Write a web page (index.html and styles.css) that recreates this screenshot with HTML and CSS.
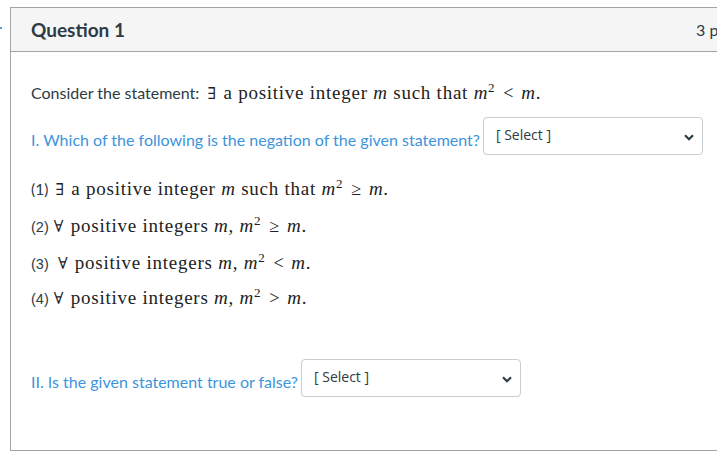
FILE: index.html
```html
<!DOCTYPE html>
<html>
<head>
<meta charset="utf-8">
<link rel="stylesheet" href="styles.css">
</head>
<body>
<div class="page">
  <span class="edge-mark"></span>
  <div class="card">
    <div class="card-header">
      <h2 class="title">Question 1</h2>
      <span class="points">3 pts</span>
    </div>
    <div class="card-body">
      <p class="line">Consider the statement:&nbsp; <span class="math"><span class="q">∃</span> a positive integer <i>m</i> such that <i>m</i><sup>2</sup><span class="rel">&lt;</span><i>m</i>.</span></p>
      <div class="row row-1">
        <span class="label">I. Which of the following is the negation of the given statement?</span>
        <div class="select wide"><span class="select-text">[ Select ]</span><svg class="chev" width="10" height="7" viewBox="0 0 10 7"><path d="M1 1.2 L5 5.2 L9 1.2" fill="none" stroke="#2d3b45" stroke-width="2.2"/></svg></div>
      </div>
      <p class="line opt"><span class="num">(1)</span> <span class="math"><span class="q">∃</span> a positive integer <i>m</i> such that <i>m</i><sup>2</sup><span class="rel">≥</span><i>m</i>.</span></p>
      <p class="line opt"><span class="num alt">(2)</span> <span class="math"><span class="q">∀</span> positive integers <i>m</i>, <i>m</i><sup>2</sup><span class="rel">≥</span><i>m</i>.</span></p>
      <p class="line opt"><span class="num alt">(3)</span>&nbsp; <span class="math"><span class="q">∀</span> positive integers <i>m</i>, <i>m</i><sup>2</sup><span class="rel">&lt;</span><i>m</i>.</span></p>
      <p class="line opt"><span class="num alt">(4)</span> <span class="math"><span class="q">∀</span> positive integers <i>m</i>, <i>m</i><sup>2</sup><span class="rel">&gt;</span><i>m</i>.</span></p>
      <div class="row row-2">
        <span class="label">II. Is the given statement true or false?</span>
        <div class="select"><span class="select-text">[ Select ]</span><svg class="chev" width="10" height="7" viewBox="0 0 10 7"><path d="M1 1.2 L5 5.2 L9 1.2" fill="none" stroke="#2d3b45" stroke-width="2.2"/></svg></div>
      </div>
    </div>
  </div>
</div>
</body>
</html>
```
FILE: styles.css
```css
html, body {
  margin: 0;
  padding: 0;
  background: #ffffff;
  overflow: hidden;
  width: 717px;
  height: 471px;
}
.page {
  position: relative;
  padding: 7px 0 0 10px;
  font-family: Lato, "Liberation Sans", sans-serif;
  color: #2d3b45;
}
.edge-mark {
  position: absolute;
  left: 0;
  top: 27px;
  width: 2px;
  height: 2px;
  background: #6a9cc7;
}
.card {
  width: 742px;
  height: 444px;
  box-sizing: border-box;
  border: 1px solid #a5a5a5;
  display: flex;
  flex-direction: column;
}
.card-header {
  height: 44px;
  box-sizing: border-box;
  background: #f5f5f5;
  border-bottom: 1px solid #a5a5a5;
  display: flex;
  align-items: center;
  justify-content: space-between;
  padding: 0 20px;
}
.title {
  margin: 0;
  font-size: 19px;
  font-weight: 700;
  color: #2d3b45;
}
.points {
  font-size: 16px;
  color: #2d3b45;
}
.card-body {
  padding: 29px 20px 0 20px;
  display: flex;
  flex-direction: column;
}
.line {
  margin: 0;
  height: 24px;
  line-height: 24px;
  font-size: 16px;
  white-space: nowrap;
}
.math {
  font-family: "Liberation Serif", "DejaVu Serif", serif;
  font-size: 19px;
  letter-spacing: 0.75px;
  color: #222;
}
.math .q {
  font-family: "DejaVu Serif", serif;
  font-size: 16px;
  font-weight: 400;
  margin-right: 1px;
}
.math .rel {
  display: inline-block;
  margin: 0 7px 0 8px;
  font-size: 18px;
}
.math i {
  font-style: italic;
}
.math sup {
  font-size: 13px;
  line-height: 0;
  vertical-align: 7px;
}
.num {
  font-size: 15.5px;
  margin-right: 3px;
}
.num.alt {
  font-family: "Liberation Sans", Arial, sans-serif;
  font-size: 14.5px;
  margin-right: 1px;
}
.row {
  display: flex;
  align-items: center;
  gap: 3px;
  height: 38px;
}
.row-1 {
  margin-top: 12px;
}
.row-2 {
  margin-top: 49px;
}
.label {
  color: #3d94db;
  font-size: 16px;
  padding-top: 7px;
  white-space: nowrap;
}
.opt {
  margin-top: 13px;
}
.opt:last-of-type {
  margin-top: 11px;
}
.row-1 + .opt {
  margin-top: 22px;
}
.select {
  width: 220px;
  height: 38px;
  box-sizing: border-box;
  border: 1px solid #c7cdd1;
  border-radius: 4px;
  display: flex;
  align-items: center;
  justify-content: space-between;
  padding: 0 8px 0 12px;
  background: #fff;
}
.select-text {
  font-family: "Open Sans", "Liberation Sans", sans-serif;
  font-size: 14px;
  color: #2d3b45;
  margin-top: -4px;
}
.chev {
  display: block;
  margin-top: 2px;
}
```
